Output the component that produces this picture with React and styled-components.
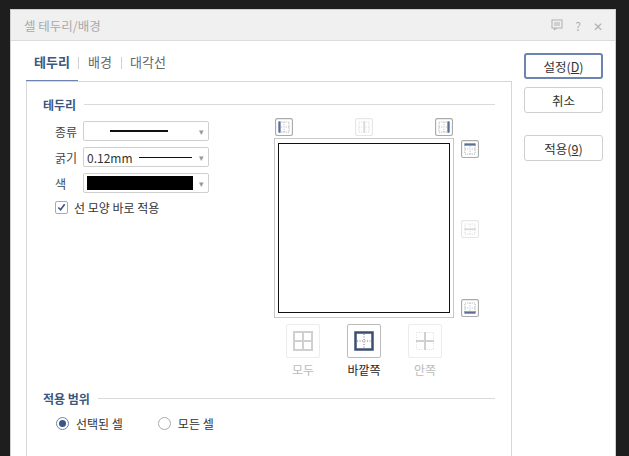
import React from 'react';
import styled, { createGlobalStyle } from 'styled-components';

const Global = createGlobalStyle`
  *, *::before, *::after { box-sizing: border-box; }
  html, body { margin: 0; background: #1e1e1e; }
  body { font-family: "Noto Sans CJK KR", "Noto Sans", sans-serif; font-size: 12px; color: #333; }
`;

const Dialog = styled.div`
  margin: 9px 0 0 10px;
  width: 606px;
  height: 447px;
  background: #fff;
  border: 1px solid #cfcfcf;
  border-bottom: none;
  display: flex;
  flex-direction: column;
  overflow: hidden;
`;

const TitleBar = styled.div`
  height: 31px;
  flex-shrink: 0;
  background: #f0f0f0;
  border-bottom: 1px solid #dcdcdc;
  display: flex;
  align-items: center;
  padding: 0 12px 0 13px;
  color: #a9a9a9;
  font-size: 12.5px;
`;

const TitleText = styled.div`flex: 1;`;

const TitleIcons = styled.div`
  display: flex;
  gap: 12px;
  align-items: center;
  color: #b0b0b0;
  font-size: 12px;
`;

const Body = styled.div`
  flex: 1;
  display: flex;
  padding: 0 12px 0 15px;
`;

const Main = styled.div`
  width: 486px;
  display: flex;
  flex-direction: column;
`;

const Tabs = styled.div`
  height: 40px;
  display: flex;
  align-items: flex-end;
`;

const Tab = styled.div`
  padding: 0 0 9px;
  width: ${p => p.$w}px;
  text-align: center;
  font-size: 13px;
  color: ${p => (p.$active ? '#3d5680' : '#666')};
  font-weight: ${p => (p.$active ? 700 : 400)};
  border-bottom: 2px solid ${p => (p.$active ? '#6b84b0' : 'transparent')};
  margin-bottom: -1px;
`;

const Sep = styled.div`
  width: 1px;
  height: 12px;
  background: #d0d0d0;
  margin-bottom: 12px;
`;

const Panel = styled.div`
  flex: 1;
  border: 1px solid #d6d6d6;
  border-bottom: none;
  padding: 14px 16px 0 16px;
  display: flex;
  flex-direction: column;
`;

const SectionHead = styled.div`
  display: flex;
  align-items: center;
  gap: 8px;
  font-weight: 700;
  color: #3d5680;
  font-size: 12px;
  &::after { content: ''; flex: 1; height: 1px; background: #dadada; }
`;

const Content = styled.div`
  display: flex;
  justify-content: space-between;
  padding-top: 1px;
`;

const Form = styled.div`
  display: flex;
  flex-direction: column;
  gap: 6px;
  padding-top: 7px;
`;

const Row = styled.div`
  display: flex;
  align-items: center;
  height: 20px;
`;

const Label = styled.div`
  width: 40px;
  padding-left: 12px;
  color: #444;
`;

const Select = styled.div`
  width: 126px;
  height: 20px;
  border: 1px solid #cfcfcf;
  border-radius: 2px;
  display: flex;
  align-items: center;
  padding: 0 4px 0 3px;
  gap: 6px;
  &::after { content: '▾'; color: #999; font-size: 9px; margin-left: auto; }
`;

const Line = styled.div`
  height: ${p => p.$h}px;
  background: #111;
  width: ${p => p.$w}px;
  margin-left: ${p => p.$ml || 0}px;
`;

const Swatch = styled.div`
  width: 106px;
  height: 14px;
  background: #000;
`;

const Check = styled.label`
  display: flex;
  align-items: center;
  gap: 6px;
  padding-left: 12px;
  margin-top: 0;
  color: #333;
`;

const Box = styled.span`
  width: 13px;
  height: 13px;
  border: 1px solid #aaa;
  border-radius: 2px;
  display: flex;
  align-items: center;
  justify-content: center;
`;

const Preview = styled.div`
  display: grid;
  grid-template-columns: 180px 18px;
  column-gap: 7px;
  margin-right: 16px;
`;

const TopIcons = styled.div`
  display: flex;
  justify-content: space-between;
  padding: 4px 1px 0 1px;
  height: 24px;
`;

const Canvas = styled.div`
  width: 180px;
  height: 180px;
  border: 1px solid #c8c8c8;
  display: flex;
  align-items: center;
  justify-content: center;
`;

const Inner = styled.div`
  width: 172px;
  height: 170px;
  border: 1.5px solid #111;
`;

const SideIcons = styled.div`
  display: flex;
  flex-direction: column;
  justify-content: space-between;
  padding: 2px 0 1px;
`;

const Modes = styled.div`
  grid-column: 1;
  display: flex;
  justify-content: center;
  gap: 27px;
  padding-top: 6px;
`;

const Mode = styled.div`
  display: flex;
  flex-direction: column;
  align-items: center;
  gap: 3px;
  color: ${p => (p.$on ? '#222' : '#bbb')};
`;

const ModeBtn = styled.div`
  width: 34px;
  height: 34px;
  border: 1px solid ${p => (p.$on ? '#bcbcbc' : '#ececec')};
  border-radius: 2px;
  display: flex;
  align-items: center;
  justify-content: center;
`;

const Radios = styled.div`
  display: flex;
  gap: 35px;
  padding: 8px 0 0 13px;
`;

const Radio = styled.div`
  display: flex;
  align-items: center;
  gap: 7px;
  color: #333;
`;

const Dot = styled.span`
  width: 13px;
  height: 13px;
  border: 1px solid ${p => (p.$on ? '#6b84b0' : '#aaa')};
  border-radius: 50%;
  display: flex;
  align-items: center;
  justify-content: center;
  &::after {
    content: '';
    width: 7px; height: 7px; border-radius: 50%;
    background: ${p => (p.$on ? '#3d5680' : 'transparent')};
  }
`;

const Side = styled.div`
  flex: 1;
  display: flex;
  flex-direction: column;
  align-items: flex-end;
  padding-top: 12px;
  gap: 8px;
`;

const Button = styled.div`
  width: 79px;
  height: 26px;
  border: ${p => (p.$primary ? '2px solid #6b84b0' : '1px solid #cfcfcf')};
  border-radius: 3px;
  display: flex;
  align-items: center;
  justify-content: center;
  color: #333;
  font-size: 12.5px;
  margin-top: ${p => p.$mt || 0}px;
`;

const Spacer = styled.div`height: ${p => p.$h}px;`;

const U = styled.span`text-decoration: underline;`;

const EdgeIcon = ({ edge, dim }) => {
  const c = dim ? '#d8d8d8' : '#5a6f94';
  const frame = dim ? '#e6e6e6' : '#aaa';
  const lines = {
    left: <rect x="3" y="3" width="2" height="10" fill={c} />,
    right: <rect x="11" y="3" width="2" height="10" fill={c} />,
    top: <rect x="3" y="3" width="10" height="2" fill={c} />,
    bottom: <rect x="3" y="11" width="10" height="2" fill={c} />,
    vmid: <rect x="7.5" y="3" width="1.5" height="10" fill={c} />,
    hmid: <rect x="3" y="7.5" width="10" height="1.5" fill={c} />,
  };
  return (
    <svg width="18" height="18" viewBox="0 0 16 16">
      <rect x="0.5" y="0.5" width="15" height="15" rx="1.5" fill="#fff" stroke={frame} />
      <rect x="3.5" y="3.5" width="9" height="9" fill="none" stroke={dim ? '#e0e0e0' : '#bbb'} strokeDasharray="1 1" />
      <path d="M8 3.5v9M3.5 8h9" stroke={dim ? '#e0e0e0' : '#bbb'} strokeDasharray="1 1" />
      {lines[edge]}
    </svg>
  );
};

const ModeIcon = ({ kind }) => {
  if (kind === 'all')
    return (
      <svg width="20" height="20" viewBox="0 0 20 20">
        <rect x="1" y="1" width="18" height="18" fill="none" stroke="#d0d0d0" strokeWidth="2" />
        <path d="M10 1v18M1 10h18" stroke="#d0d0d0" strokeWidth="2" />
      </svg>
    );
  if (kind === 'out')
    return (
      <svg width="20" height="20" viewBox="0 0 20 20">
        <rect x="1.5" y="1.5" width="17" height="17" fill="none" stroke="#3d4f6f" strokeWidth="2.5" />
        <path d="M10 3v14M3 10h14" stroke="#777" strokeDasharray="1 1.5" />
      </svg>
    );
  return (
    <svg width="20" height="20" viewBox="0 0 20 20">
      <rect x="1.5" y="1.5" width="17" height="17" fill="none" stroke="#ddd" strokeDasharray="1 1.5" />
      <path d="M10 1v18M1 10h18" stroke="#d0d0d0" strokeWidth="2" />
    </svg>
  );
};

export default function App() {
  return (
    <>
      <Global />
      <Dialog>
        <TitleBar>
          <TitleText>셀 테두리/배경</TitleText>
          <TitleIcons>
            <svg width="12" height="12" viewBox="0 0 12 12">
              <rect x="1" y="1" width="10" height="8" fill="none" stroke="#b0b0b0" />
              <path d="M3 4h6M3 6h6M4 9l-1 2 3-2" stroke="#b0b0b0" fill="none" />
            </svg>
            <span>?</span>
            <span>✕</span>
          </TitleIcons>
        </TitleBar>
        <Body>
          <Main>
            <Tabs>
              <Tab $active $w={52}>테두리</Tab>
              <Sep />
              <Tab $w={42}>배경</Tab>
              <Sep />
              <Tab $w={52}>대각선</Tab>
            </Tabs>
            <Panel>
              <SectionHead>테두리</SectionHead>
              <Content>
                <Form>
                  <Row>
                    <Label>종류</Label>
                    <Select><Line $h={2} $w={58} $ml={23} /></Select>
                  </Row>
                  <Row>
                    <Label>굵기</Label>
                    <Select>0.12mm<Line $h={1} $w={53} /></Select>
                  </Row>
                  <Row>
                    <Label>색</Label>
                    <Select><Swatch /></Select>
                  </Row>
                  <Check>
                    <Box>
                      <svg width="9" height="9" viewBox="0 0 10 10">
                        <path d="M1.5 5l2.5 2.5 4.5-6" stroke="#3d5680" strokeWidth="1.8" fill="none" />
                      </svg>
                    </Box>
                    선 모양 바로 적용
                  </Check>
                </Form>
                <Preview>
                  <TopIcons>
                    <EdgeIcon edge="left" />
                    <EdgeIcon edge="vmid" dim />
                    <EdgeIcon edge="right" />
                  </TopIcons>
                  <div />
                  <Canvas><Inner /></Canvas>
                  <SideIcons>
                    <EdgeIcon edge="top" />
                    <EdgeIcon edge="hmid" dim />
                    <EdgeIcon edge="bottom" />
                  </SideIcons>
                  <Modes>
                    <Mode><ModeBtn><ModeIcon kind="all" /></ModeBtn>모두</Mode>
                    <Mode $on><ModeBtn $on><ModeIcon kind="out" /></ModeBtn>바깥쪽</Mode>
                    <Mode><ModeBtn><ModeIcon kind="in" /></ModeBtn>안쪽</Mode>
                  </Modes>
                </Preview>
              </Content>
              <Spacer $h={12} />
              <SectionHead>적용 범위</SectionHead>
              <Radios>
                <Radio><Dot $on />선택된 셀</Radio>
                <Radio><Dot />모든 셀</Radio>
              </Radios>
            </Panel>
          </Main>
          <Side>
            <Button $primary>설정(<U>D</U>)</Button>
            <Button>취소</Button>
            <Button $mt={14}>적용(<U>9</U>)</Button>
          </Side>
        </Body>
      </Dialog>
    </>
  );
}
